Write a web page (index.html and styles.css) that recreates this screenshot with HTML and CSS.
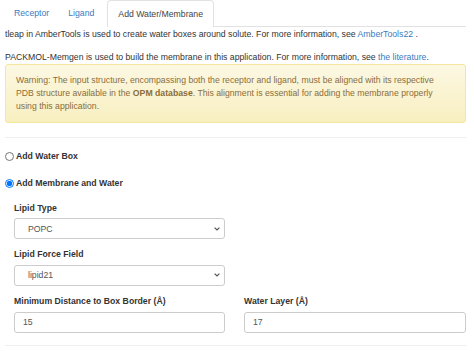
FILE: index.html
```html
<!DOCTYPE html>
<html lang="en">
<head>
  <meta charset="UTF-8">
  <title>Add Water/Membrane</title>
  <link rel="stylesheet" href="styles.css">
</head>
<body>
  <div class="page">

    <!-- Tabs -->
    <ul class="tabs">
      <li class="tab">Receptor</li>
      <li class="tab">Ligand</li>
      <li class="tab active">Add Water/Membrane</li>
      <li class="tab-rest"></li>
    </ul>

    <p class="info">tleap in AmberTools is used to create water boxes around solute. For more information, see <a href="#">AmberTools22</a> .</p>
    <p class="info">PACKMOL-Memgen is used to build the membrane in this application. For more information, see <a href="#">the literature</a>.</p>

    <div class="warning">
      Warning: The input structure, encompassing both the receptor and ligand, must be aligned with its respective PDB structure available in the <b>OPM database</b>. This alignment is essential for adding the membrane properly using this application.
    </div>

    <hr class="divider">

    <label class="radio"><input type="radio" name="mode"> Add Water Box</label>
    <label class="radio"><input type="radio" name="mode" checked> Add Membrane and Water</label>

    <div class="options">
      <div class="field half">
        <label class="field-label">Lipid Type</label>
        <select class="control">
          <option>POPC</option>
        </select>
      </div>

      <div class="field half">
        <label class="field-label">Lipid Force Field</label>
        <select class="control">
          <option>lipid21</option>
        </select>
      </div>

      <div class="row">
        <div class="field">
          <label class="field-label">Minimum Distance to Box Border (&Aring;)</label>
          <input class="control" type="text" value="15">
        </div>
        <div class="field">
          <label class="field-label">Water Layer (&Aring;)</label>
          <input class="control" type="text" value="17">
        </div>
      </div>
    </div>

    <hr class="divider last">
  </div>
</body>
</html>
```

FILE: styles.css
```css
/* Grundlayout */
body {
  margin: 0;
  font-family: "Liberation Sans", Arial, sans-serif;
  font-size: 8.7px;
  line-height: 12.7px;
  color: #333;
  background: #fff;
}

.page {
  width: 461px;
  padding-left: 5px;
}

a {
  color: #3a7bbf;
  text-decoration: none;
}

/* Tabs */
.tabs {
  list-style: none;
  margin: 0;
  padding: 0;
  display: flex;
  height: 27px;
}

.tab {
  padding: 0 10px 0 9px;
  line-height: 27px;
  color: #3a7bbf;
}

.tab.active {
  margin-left: 3px;
  padding: 0 10px;
  color: #444;
  border: 1px solid #e2e2e2;
  border-bottom: none;
  border-radius: 4px 4px 0 0;
  line-height: 26px;
}

.tab-rest {
  flex: 1;
  border-bottom: 1px solid #e2e2e2;
}

/* Texte */
.info {
  margin: 1px 0 10px;
}

.info + .info {
  margin: 0 0 1px;
}

.warning {
  padding: 9px 26px 9px 10px;
  background: linear-gradient(#fcf8e3, #f8efc0);
  border: 1px solid #f5e79e;
  border-radius: 3px;
  color: #8a6d3b;
}

.divider {
  border: none;
  border-top: 1px solid #eee;
  margin: 14px 0 12px;
}

.divider.last {
  margin-top: 12px;
}

/* Radio-Auswahl */
.radio {
  display: flex;
  align-items: center;
  font-weight: bold;
  margin-bottom: 14px;
  height: 13px;
}

.radio input {
  margin: 0 2px 0 0;
  width: 9px;
  height: 9px;
}

/* Formular */
.options {
  padding-left: 9px;
  margin-top: -2px;
}

.field {
  display: flex;
  flex-direction: column;
  margin-bottom: 9px;
}

.half {
  width: 211px;
}

.field-label {
  font-weight: bold;
  margin-bottom: 4px;
}

.control {
  box-sizing: border-box;
  height: 21px;
  border: 1px solid #ccc;
  border-radius: 3px;
  background: #fff;
  color: #555;
  font-family: inherit;
  font-size: 8.7px;
  padding: 0 8px;
}

select.control {
  appearance: none;
  padding-left: 13px;
  background: #fff url("data:image/svg+xml,%3Csvg xmlns='http://www.w3.org/2000/svg' width='6' height='4' viewBox='0 0 6 4'%3E%3Cpath d='M0.6 0.6 L3 3 L5.4 0.6' fill='none' stroke='%23555' stroke-width='1.2'/%3E%3C/svg%3E") no-repeat right 4px center;
}

.row {
  display: grid;
  grid-template-columns: 211px 222px;
  column-gap: 19px;
}

.row .field {
  margin-bottom: 0;
}
```
